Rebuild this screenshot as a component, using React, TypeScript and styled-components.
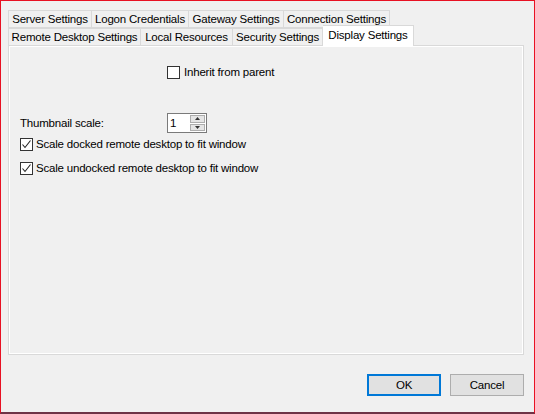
import React from 'react';
import styled, { createGlobalStyle } from 'styled-components';

const GlobalStyle = createGlobalStyle`
  html, body {
    margin: 0;
    padding: 0;
    background: #f0f0f0;
  }
  body {
    font-family: "Liberation Sans", Arial, sans-serif;
    font-size: 11.5px;
    letter-spacing: -0.2px;
    color: #000;
  }
`;

const Window = styled.div`
  width: 535px;
  height: 414px;
  box-sizing: border-box;
  border: 1px solid #e81123;
  border-bottom: 2px solid #6e3346;
  background: #f0f0f0;
  padding: 9px 10px 0 7px;
  display: flex;
  flex-direction: column;
`;

const TabStrip = styled.div`
  display: flex;
  flex-direction: column;
  height: 35px;
  position: relative;
  z-index: 1;
`;

const TabRow = styled.div`
  display: flex;
  height: 18px;
`;

const Tab = styled.div<{ w: number; selected?: boolean }>`
  box-sizing: border-box;
  width: ${p => p.w}px;
  height: ${p => (p.selected ? 21 : 18)}px;
  margin-top: ${p => (p.selected ? -3 : 0)}px;
  border: 1px solid #d9d9d9;
  border-left-width: 0;
  border-bottom: ${p => (p.selected ? 'none' : '1px solid #d9d9d9')};
  background: ${p => (p.selected ? '#ffffff' : '#f0f0f0')};
  display: flex;
  align-items: center;
  justify-content: center;
  padding-top: ${p => (p.selected ? 0 : 1)}px;
  white-space: nowrap;
  line-height: 1;

  &:first-child {
    border-left-width: 1px;
  }
`;

const Panel = styled.div`
  box-sizing: border-box;
  width: 516px;
  height: 310px;
  border: 1px solid #d9d9d9;
  box-shadow: inset 1px 1px 0 #ffffff, inset -1px -1px 0 #ffffff;
  background: #f0f0f0;
  padding: 19px 0 0 11px;
  display: flex;
  flex-direction: column;
`;

const InheritRow = styled.label`
  display: flex;
  align-items: center;
  gap: 4px;
  margin-left: 147px;
  height: 14px;
`;

const CheckRow = styled.label`
  display: flex;
  align-items: center;
  gap: 3px;
  height: 14px;
`;

const Box = styled.span`
  box-sizing: border-box;
  width: 13px;
  height: 13px;
  border: 1px solid #333333;
  background: #ffffff;
  display: inline-flex;
  align-items: center;
  justify-content: center;
  flex-shrink: 0;
`;

const ScaleRow = styled.div`
  display: flex;
  align-items: center;
  margin-top: 34px;
  height: 20px;
`;

const ScaleLabel = styled.span`
  width: 147px;
`;

const Spinner = styled.div`
  box-sizing: border-box;
  width: 40px;
  height: 20px;
  border: 1px solid #7a7a7a;
  background: #ffffff;
  display: flex;
  align-items: stretch;
`;

const SpinValue = styled.span`
  flex: 1;
  padding-left: 2px;
  display: flex;
  align-items: center;
`;

const SpinButtons = styled.div`
  width: 15px;
  display: flex;
  flex-direction: column;
  gap: 1px;
  padding: 1px 1px 1px 0;
`;

const SpinButton = styled.div`
  flex: 1;
  background: #e5e5e5;
  border: 1px solid #adadad;
  display: flex;
  align-items: center;
  justify-content: center;
`;

const Checks = styled.div`
  display: flex;
  flex-direction: column;
  gap: 10px;
  margin-top: 4px;
`;

const Footer = styled.div`
  display: flex;
  justify-content: flex-end;
  gap: 9px;
  margin-top: 19px;
  width: 516px;
`;

const Button = styled.div<{ primary?: boolean }>`
  box-sizing: border-box;
  width: 74px;
  height: 22px;
  border: 1px solid ${p => (p.primary ? '#0078d7' : '#adadad')};
  box-shadow: ${p => (p.primary ? 'inset 0 0 0 1px #0078d7' : 'none')};
  background: #e1e1e1;
  display: flex;
  align-items: center;
  justify-content: center;
`;

const Check = () => (
  <svg width="11" height="11" viewBox="0 0 11 11">
    <path d="M1.5 5.5 L4 8.5 L9.5 1.5" fill="none" stroke="#222" strokeWidth="1.1" />
  </svg>
);

const Arrow = ({ up }: { up?: boolean }) => (
  <svg width="5" height="3" viewBox="0 0 5 3">
    <path d={up ? 'M0 3 L2.5 0 L5 3 Z' : 'M0 0 L2.5 3 L5 0 Z'} fill="#333" />
  </svg>
);

const App: React.FC = () => (
  <>
    <GlobalStyle />
    <Window>
      <TabStrip>
        <TabRow>
          <Tab w={84}>Server Settings</Tab>
          <Tab w={97}>Logon Credentials</Tab>
          <Tab w={95}>Gateway Settings</Tab>
          <Tab w={106}>Connection Settings</Tab>
        </TabRow>
        <TabRow>
          <Tab w={133}>Remote Desktop Settings</Tab>
          <Tab w={92}>Local Resources</Tab>
          <Tab w={90}>Security Settings</Tab>
          <Tab w={91} selected>Display Settings</Tab>
        </TabRow>
      </TabStrip>
      <Panel>
        <InheritRow>
          <Box />
          Inherit from parent
        </InheritRow>
        <ScaleRow>
          <ScaleLabel>Thumbnail scale:</ScaleLabel>
          <Spinner>
            <SpinValue>1</SpinValue>
            <SpinButtons>
              <SpinButton><Arrow up /></SpinButton>
              <SpinButton><Arrow /></SpinButton>
            </SpinButtons>
          </Spinner>
        </ScaleRow>
        <Checks>
          <CheckRow>
            <Box><Check /></Box>
            Scale docked remote desktop to fit window
          </CheckRow>
          <CheckRow>
            <Box><Check /></Box>
            Scale undocked remote desktop to fit window
          </CheckRow>
        </Checks>
      </Panel>
      <Footer>
        <Button primary>OK</Button>
        <Button>Cancel</Button>
      </Footer>
    </Window>
  </>
);

export default App;
